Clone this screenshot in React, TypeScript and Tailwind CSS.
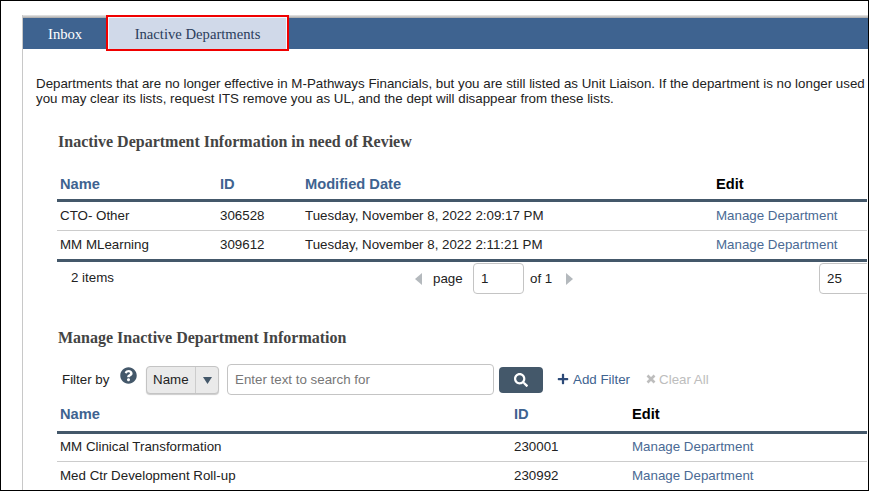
import { FaQuestionCircle, FaSearch, FaPlus } from "react-icons/fa";

const sans = "font-['Liberation_Sans',Arial,sans-serif]";
const serif = "font-['Liberation_Serif','Times_New_Roman',serif]";

function Row({ cols, cells, last }: { cols: string; cells: string[]; last?: boolean }) {
  return (
    <div className={`grid ${cols} ${last ? "h-[28px]" : "h-[28px] border-b border-[#cccccc] pb-[1px]"} items-center text-[13.33px] text-[#222222]`}>
      <div className="pl-[3px]">{cells[0]}</div>
      {cells.slice(1, -1).map((c) => (
        <div key={c}>{c}</div>
      ))}
      <div className="text-[#4a6a94]">{cells[cells.length - 1]}</div>
    </div>
  );
}

const Tri = ({ dir }: { dir: "l" | "r" }) => (
  <svg width="7" height="12" viewBox="0 0 7 12" className="shrink-0">
    <path d={dir === "l" ? "M7 0v12L0 6z" : "M0 0v12l7-6z"} fill="#b4b9bd" />
  </svg>
);

export default function App() {
  const cols1 = "grid-cols-[163px_85px_411px_1fr]";
  const cols2 = "grid-cols-[457px_118px_1fr]";
  return (
    <div className={`${sans} w-[869px] h-[491px] overflow-hidden bg-white border border-black box-border`}>
      <div className="h-[14px]" />
      <div className="ml-[21px] h-[475px] border-l border-[#c8c8c8] overflow-hidden">
        <div className="h-[3px] bg-gradient-to-b from-[#e8e8e8] to-[#a8a8a8]" />
        <div className={`${serif} relative h-[31px] bg-[#3e6390] text-[14.67px] flex items-center`}>
          <div className="w-[83px] pl-[25px] text-white">Inbox</div>
          <div className="absolute left-[83px] -top-[3px] w-[183px] h-[36px] border-[2px] border-[#f00000] bg-[#d0d9e9] text-[#2b3d5c] flex items-center justify-center">
            <div className="w-[179px] h-[32px] border border-white/80 border-b-0 flex items-center justify-center">
              Inactive Departments
            </div>
          </div>
        </div>

        <div className="pt-[27px] pl-[13px] text-[13.33px] leading-[15px] text-[#222222] whitespace-nowrap">
          <div>Departments that are no longer effective in M-Pathways Financials, but you are still listed as Unit Liaison. If the department is no longer used</div>
          <div>you may clear its lists, request ITS remove you as UL, and the dept will disappear from these lists.</div>
        </div>

        <div className={`${serif} ml-[35px] mt-[28px] h-[16px] leading-[16px] text-[16px] font-bold text-[#444444]`}>
          Inactive Department Information in need of Review
        </div>

        <div className="ml-[34px] mr-[1px] mt-[15px]">
          <div className={`grid ${cols1} h-[37px] items-center border-b-[3px] border-[#44586a] text-[14.67px] font-bold text-[#3e6390] pt-[4px]`}>
            <div className="pl-[3px]">Name</div>
            <div>ID</div>
            <div>Modified Date</div>
            <div className="text-black">Edit</div>
          </div>
          <div className={`grid ${cols1} h-[29px] items-center border-b border-[#cccccc] pb-[1px] text-[13.33px] text-[#222222]`}>
            <div className="pl-[3px]">CTO- Other</div>
            <div>306528</div>
            <div>Tuesday, November 8, 2022 2:09:17 PM</div>
            <div className="text-[#4a6a94]">Manage Department</div>
          </div>
          <div className={`grid ${cols1} h-[31px] items-center border-b-[3px] border-[#44586a] pb-[1px] text-[13.33px] text-[#222222]`}>
            <div className="pl-[3px]">MM MLearning</div>
            <div>309612</div>
            <div>Tuesday, November 8, 2022 2:11:21 PM</div>
            <div className="text-[#4a6a94]">Manage Department</div>
          </div>
          <div className="flex items-center h-[33px] text-[13.33px] text-[#222222] whitespace-nowrap overflow-hidden">
            <div className="w-[358px] shrink-0 pl-[14px] -mt-[2px]">2 items</div>
            <Tri dir="l" />
            <div className="ml-[11px] w-[30px] shrink-0 mt-[1px]">page</div>
            <div className="ml-[10px] w-[51px] h-[31px] shrink-0 border border-[#c4c4c4] rounded-[4px] pl-[7px] flex items-center">1</div>
            <div className="ml-[6px] w-[22px] shrink-0">of 1</div>
            <div className="ml-[14px] shrink-0"><Tri dir="r" /></div>
            <div className="ml-[246px] w-[60px] h-[31px] shrink-0 border border-[#c4c4c4] rounded-[4px] pl-[7px] flex items-center">25</div>
          </div>
        </div>

        <div className={`${serif} ml-[35px] mt-[35px] h-[16px] leading-[16px] text-[16px] font-bold text-[#444444]`}>
          Manage Inactive Department Information
        </div>

        <div className="ml-[39px] mt-[18px] h-[31px] flex items-center text-[13.33px] whitespace-nowrap">
          <div className="text-[#222222] w-[58px] shrink-0">Filter by</div>
          <FaQuestionCircle className="text-[17px] shrink-0 text-[#44586a] -mt-[9px]" />
          <div className="ml-[9px] w-[73px] h-[28px] shrink-0 flex items-center border border-[#c4c4c4] rounded-[4px] bg-[#eaeaea] text-[#222222] shadow-[0_1px_1px_#cccccc] mt-[1px]">
            <div className="w-[49px] pl-[6px] h-full flex items-center border-r border-[#cccccc]">Name</div>
            <svg width="9" height="7" viewBox="0 0 9 7" className="ml-[7px]"><path d="M0 0h9L4.5 7z" fill="#44586a" /></svg>
          </div>
          <div className="ml-[8px] w-[267px] h-[31px] shrink-0 border border-[#c4c4c4] rounded-[4px] pl-[7px] flex items-center text-[#777777]">
            Enter text to search for
          </div>
          <div className="ml-[5px] w-[44px] h-[26px] shrink-0 bg-[#44586a] rounded-[4px] flex items-center justify-center">
            <FaSearch className="text-[14px] text-white" />
          </div>
          <div className="ml-[14px] flex items-center text-[#3e6390] shrink-0">
            <FaPlus className="text-[12px] text-[#2c4a78] mr-[4px]" />
            Add Filter
          </div>
          <div className="ml-[16px] flex items-center text-[#bdbdbd] shrink-0">
            <svg width="10" height="10" viewBox="0 0 10 10" className="mr-[3px]">
              <path d="M1.5 1.5l7 7M8.5 1.5l-7 7" stroke="#bdbdbd" strokeWidth="2.6" />
            </svg>
            Clear All
          </div>
        </div>

        <div className="ml-[34px] mr-[1px]">
          <div className={`grid ${cols2} h-[39px] items-center border-b-[3px] border-[#44586a] text-[14.67px] font-bold text-[#3e6390] pt-[2px]`}>
            <div className="pl-[3px]">Name</div>
            <div>ID</div>
            <div className="text-black">Edit</div>
          </div>
          <Row cols={cols2} cells={["MM Clinical Transformation", "230001", "Manage Department"]} />
          <Row cols={cols2} last cells={["Med Ctr Development Roll-up", "230992", "Manage Department"]} />
        </div>
      </div>
    </div>
  );
}
